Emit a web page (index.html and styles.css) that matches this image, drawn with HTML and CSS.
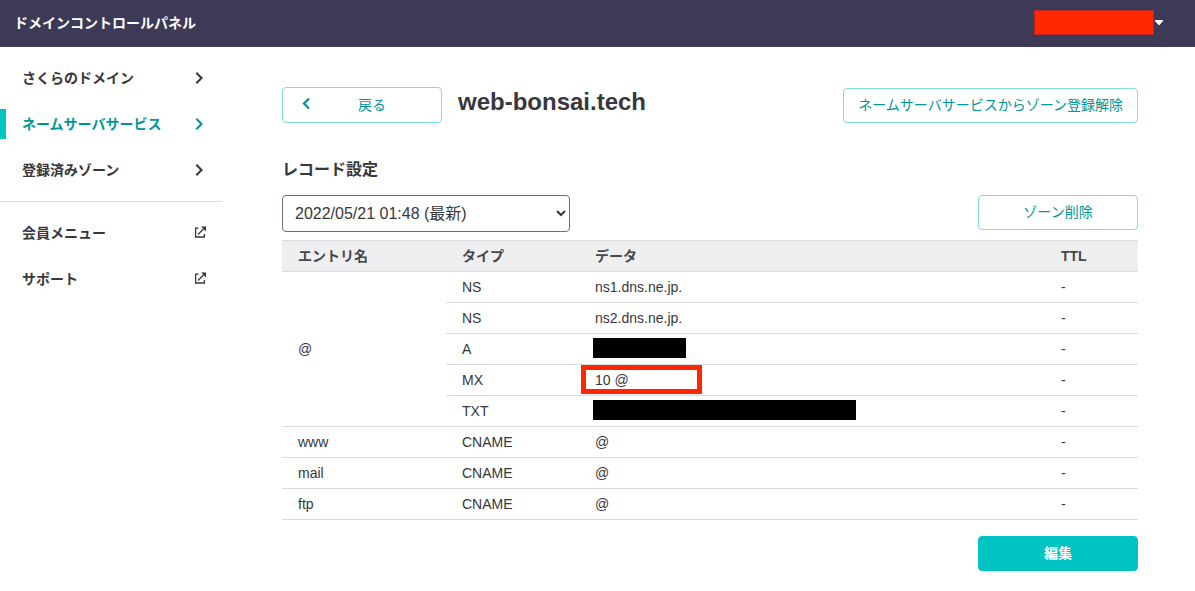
FILE: index.html
```
<!DOCTYPE html>
<html lang="ja">

<head>
    <meta charset="utf-8">
    <meta name="viewport" content="width=device-width, initial-scale=1">
    <title>ドメインコントロールパネル</title>
    <link rel="stylesheet" href="styles.css">
</head>

<body>
    <header class="header">
        <a class="header-title" href="#">ドメインコントロールパネル</a>
        <button class="account" type="button" aria-label="アカウント">
            <span class="account-name"></span>
            <svg class="caret" width="8" height="5" viewBox="0 0 8 5"><path d="M0 0h8v1L4.5 5h-1L0 1z" fill="currentColor"/></svg>
        </button>
    </header>

    <div class="container">
        <nav class="sidebar">
            <ul class="menu">
                <li><a class="menu-link" href="#">さくらのドメイン
                    <svg class="menu-icon" width="16" height="16" viewBox="0 0 16 16"><path d="M4.3 2.8L9.5 8l-5.2 5.2" fill="none" stroke="currentColor" stroke-width="2.1"/></svg></a></li>
                <li><a class="menu-link active" href="#">ネームサーバサービス
                    <svg class="menu-icon" width="16" height="16" viewBox="0 0 16 16"><path d="M4.3 2.8L9.5 8l-5.2 5.2" fill="none" stroke="currentColor" stroke-width="2.1"/></svg></a></li>
                <li><a class="menu-link" href="#">登録済みゾーン
                    <svg class="menu-icon" width="16" height="16" viewBox="0 0 16 16"><path d="M4.3 2.8L9.5 8l-5.2 5.2" fill="none" stroke="currentColor" stroke-width="2.1"/></svg></a></li>
            </ul>
            <ul class="menu menu-external">
                <li><a class="menu-link" href="#">会員メニュー
                    <svg class="menu-icon" width="16" height="16" viewBox="0 0 16 16"><path d="M6.5 3.2H3.6v8.8h8.8V9M6 9.5l5.5-5.5" fill="none" stroke="currentColor" stroke-width="1.3"/><path d="M9 1.5h5v5z" fill="currentColor"/></svg></a></li>
                <li><a class="menu-link" href="#">サポート
                    <svg class="menu-icon" width="16" height="16" viewBox="0 0 16 16"><path d="M6.5 3.2H3.6v8.8h8.8V9M6 9.5l5.5-5.5" fill="none" stroke="currentColor" stroke-width="1.3"/><path d="M9 1.5h5v5z" fill="currentColor"/></svg></a></li>
            </ul>
        </nav>

        <main class="main">
            <div class="title-row">
                <button class="btn btn-back" type="button">
                    <svg class="back-icon" width="10" height="14" viewBox="0 0 10 14"><path d="M8 1.5L3 6.5l5 5" fill="none" stroke="currentColor" stroke-width="2.3"/></svg>
                    戻る
                </button>
                <h1 class="title">web-bonsai.tech</h1>
                <button class="btn btn-wide" type="button">ネームサーバサービスからゾーン登録解除</button>
            </div>

            <h2 class="subtitle"><label for="history">レコード設定</label></h2>

            <div class="tools">
                <select class="history" id="history">
                    <option>2022/05/21 01:48 (最新)</option>
                </select>
                <button class="btn" type="button">ゾーン削除</button>
            </div>

            <table class="records">
                <thead>
                    <tr>
                        <th class="col-entry">エントリ名</th>
                        <th class="col-type">タイプ</th>
                        <th>データ</th>
                        <th class="col-ttl">TTL</th>
                    </tr>
                </thead>
                <tbody>
                    <tr><td rowspan="5">@</td><td>NS</td><td>ns1.dns.ne.jp.</td><td>-</td></tr>
                    <tr><td>NS</td><td>ns2.dns.ne.jp.</td><td>-</td></tr>
                    <tr><td>A</td><td class="data"><span class="mask mask-short"></span></td><td>-</td></tr>
                    <tr><td>MX</td><td class="data">10 @<span class="mark"></span></td><td>-</td></tr>
                    <tr><td>TXT</td><td class="data"><span class="mask mask-long"></span></td><td>-</td></tr>
                    <tr><td>www</td><td>CNAME</td><td>@</td><td>-</td></tr>
                    <tr><td>mail</td><td>CNAME</td><td>@</td><td>-</td></tr>
                    <tr><td>ftp</td><td>CNAME</td><td>@</td><td>-</td></tr>
                </tbody>
            </table>

            <div class="actions">
                <button class="btn btn-primary" type="button">編集</button>
            </div>
        </main>
    </div>
</body>

</html>
```
FILE: styles.css
```
* {
    box-sizing: border-box;
}
body {
    margin: 0;
    background: #fff;
    color: #37373c;
    font-family: "Liberation Sans", "Noto Sans CJK JP", sans-serif;
    font-size: 14px;
    line-height: 20px;
}
button, select {
    font-family: inherit;
    color: inherit;
}
a {
    color: inherit;
    text-decoration: none;
}

/* header */
.header {
    display: flex;
    align-items: center;
    justify-content: space-between;
    height: 47px;
    padding: 0 32px 2px 14px;
    background: #3c3a56;
    color: #fff;
}
.header-title {
    font-weight: bold;
}
.account {
    display: flex;
    align-items: center;
    gap: 1px;
    padding: 0;
    border: 0;
    background: none;
    color: #fff;
    cursor: pointer;
}
.account-name {
    width: 120px;
    height: 25px;
    border: 1px solid #b8281e;
    background: #ff2600;
}

/* sidebar */
.container {
    display: flex;
}
.sidebar {
    flex: 0 0 222px;
}
.menu {
    margin: 0;
    padding: 8px 0;
    list-style: none;
}
.menu-external {
    border-top: 1px solid #dcdcdf;
}
.menu-link {
    position: relative;
    display: flex;
    align-items: center;
    justify-content: space-between;
    height: 46px;
    padding: 0 14px 0 22px;
    font-weight: bold;
}
.active {
    color: #009696;
}
.active::before {
    content: "";
    position: absolute;
    left: 0;
    top: 8px;
    width: 6px;
    height: 30px;
    background: #00c3c3;
}

/* contents */
.main {
    flex: 1;
    padding: 40px 57px 20px 60px;
}
.title-row {
    display: flex;
    align-items: flex-end;
    gap: 16px;
}
.title {
    flex: 1;
    margin: 0;
    font-size: 24px;
    line-height: 30px;
    padding-bottom: 6px;
}
.subtitle {
    margin: 35px 0 13px;
    font-size: 16px;
    line-height: 24px;
}
.btn {
    min-width: 160px;
    height: 35px;
    padding: 0 14px 3px;
    border: 1px solid #80dcd8;
    border-radius: 4px;
    background: #fff;
    color: #009696;
    font-size: 14px;
    white-space: nowrap;
    cursor: pointer;
}
.btn-back {
    position: relative;
    height: 36px;
    padding-left: 34px;
}
.back-icon {
    position: absolute;
    left: 18px;
    top: 9px;
}
.tools {
    display: flex;
    justify-content: space-between;
    margin-bottom: 8px;
}
.history {
    width: 288px;
    height: 37px;
    padding: 0 4px 0 8px;
    border: 1px solid #6e6c87;
    border-radius: 4px;
    background: #fff;
    font-size: 16px;
}

/* records */
.records {
    width: 100%;
    border-collapse: collapse;
    table-layout: fixed;
}
.records th,
.records td {
    height: 31px;
    padding: 0 16px;
    border-bottom: 1px solid #dcdcdf;
    text-align: left;
}
.records th {
    border-top: 1px solid #dcdcdf;
    background: #efeff1;
    color: #46464b;
}
.col-entry {
    width: 164px;
}
.col-type {
    width: 133px;
}
.col-ttl {
    width: 93px;
}
.data {
    position: relative;
}
.mask {
    position: absolute;
    top: 4px;
    left: 14px;
    height: 20px;
    background: #000;
}
.mask-short {
    width: 93px;
}
.mask-long {
    width: 263px;
}
.mark {
    position: absolute;
    top: 0;
    left: 2px;
    width: 121px;
    height: 29px;
    border: 5px solid #ff2600;
}
.actions {
    display: flex;
    justify-content: flex-end;
    margin-top: 16px;
}
.btn-primary {
    border-color: #00c3c3;
    background: #00c3c3;
    color: #fff;
    font-weight: bold;
}
```
